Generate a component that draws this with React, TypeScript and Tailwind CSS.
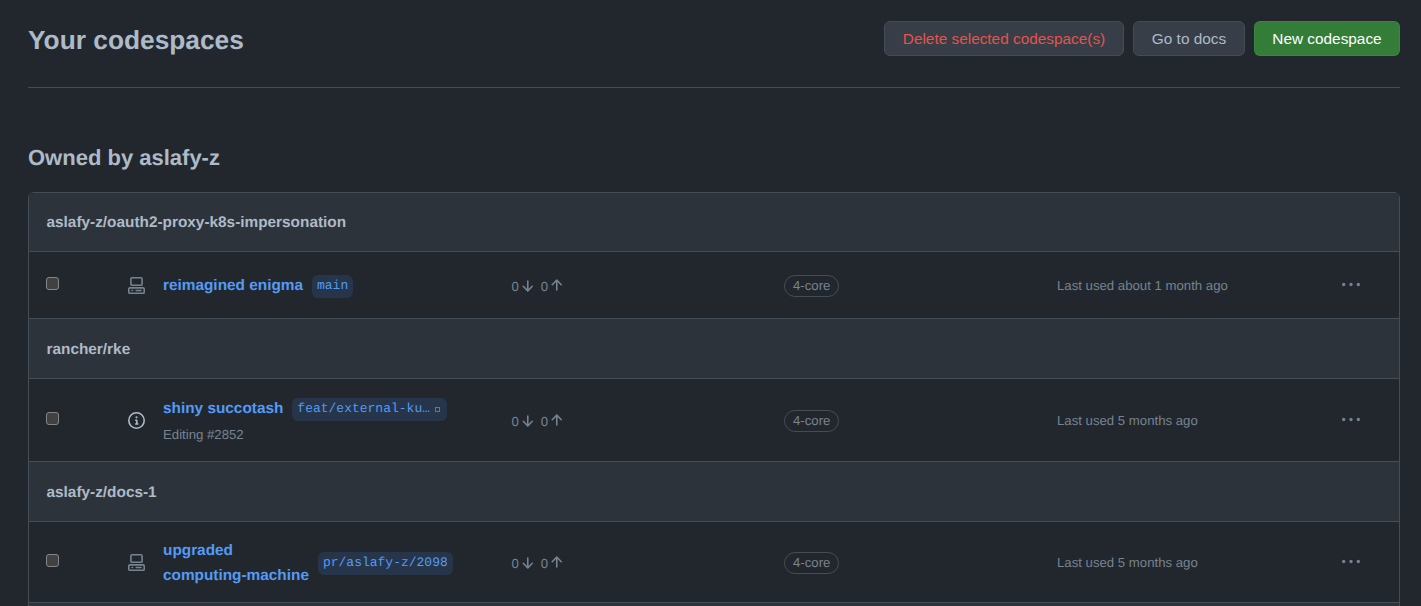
const CODESPACE = [
  "M0 11.25c0-.966.784-1.75 1.75-1.75h12.5c.966 0 1.75.784 1.75 1.75v3A1.75 1.75 0 0 1 14.25 16H1.75A1.75 1.75 0 0 1 0 14.25Zm2-9.5C2 .784 2.784 0 3.75 0h8.5C13.216 0 14 .784 14 1.75v5a1.75 1.75 0 0 1-1.75 1.75h-8.5A1.75 1.75 0 0 1 2 6.75Zm1.75-.25a.25.25 0 0 0-.25.25v5c0 .138.112.25.25.25h8.5a.25.25 0 0 0 .25-.25v-5a.25.25 0 0 0-.25-.25Zm-2 9.5a.25.25 0 0 0-.25.25v3c0 .138.112.25.25.25h12.5a.25.25 0 0 0 .25-.25v-3a.25.25 0 0 0-.25-.25Z",
  "M7 12.75a.75.75 0 0 1 .75-.75h4.5a.75.75 0 0 1 0 1.5h-4.5a.75.75 0 0 1-.75-.75Zm-4 0a.75.75 0 0 1 .75-.75h.5a.75.75 0 0 1 0 1.5h-.5a.75.75 0 0 1-.75-.75Z",
];
const INFO = [
  "M0 8a8 8 0 1 1 16 0A8 8 0 0 1 0 8Zm8-6.5a6.5 6.5 0 1 0 0 13 6.5 6.5 0 0 0 0-13ZM6.5 7.75A.75.75 0 0 1 7.25 7h1a.75.75 0 0 1 .75.75v2.75h.25a.75.75 0 0 1 0 1.5h-2a.75.75 0 0 1 0-1.5h.25v-2h-.25a.75.75 0 0 1-.75-.75ZM8 6a1 1 0 1 1 0-2 1 1 0 0 1 0 2Z",
];
const ARROW_DOWN = [
  "M13.03 8.22a.75.75 0 0 1 0 1.06l-4.25 4.25a.75.75 0 0 1-1.06 0L3.47 9.28a.751.751 0 0 1 .018-1.042.751.751 0 0 1 1.042-.018l2.97 2.97V3.75a.75.75 0 0 1 1.5 0v7.44l2.97-2.97a.75.75 0 0 1 1.06 0Z",
];
const ARROW_UP = [
  "M3.47 7.78a.75.75 0 0 1 0-1.06l4.25-4.25a.75.75 0 0 1 1.06 0l4.25 4.25a.751.751 0 0 1-.018 1.042.751.751 0 0 1-1.042.018L9 4.81v7.44a.75.75 0 0 1-1.5 0V4.81L4.53 7.78a.75.75 0 0 1-1.06 0Z",
];
const KEBAB = [
  "M8 9a1.5 1.5 0 1 0 0-3 1.5 1.5 0 0 0 0 3ZM1.5 9a1.5 1.5 0 1 0 0-3 1.5 1.5 0 0 0 0 3Zm13 0a1.5 1.5 0 1 0 0-3 1.5 1.5 0 0 0 0 3Z",
];

function Octicon({ paths, className }: { paths: string[]; className: string }) {
  return (
    <svg viewBox="0 0 16 16" fill="currentColor" className={className} aria-hidden="true">
      {paths.map((d) => (
        <path key={d} d={d} />
      ))}
    </svg>
  );
}

function RepoHeader({ name, height = "h-[60px]" }: { name: string; height?: string }) {
  return (
    <div className={`${height} pt-[2px] pl-[17.5px] flex items-center bg-[#2d333b] border-b border-[#444c56] text-[15.36px] font-bold text-[#adbac7]`}>
      {name}
    </div>
  );
}

type RowProps = {
  height: string;
  icon: string[];
  iconColor: string;
  title: string[];
  branch: string;
  note?: string;
  truncated?: boolean;
  lastUsed: string;
};

function Row({ height, icon, iconColor, title, branch, note, truncated, lastUsed }: RowProps) {
  return (
    <div className={`${height} pt-[2px] pl-[17px] grid grid-cols-[82px_35px_349px_272px_273px_1fr] items-center border-b border-[#444c56]`}>
      <div className="w-[13px] h-[13px] rounded-[3px] border border-[#858585] bg-[#414141] -mt-[5px]" />
      <Octicon paths={icon} className={`w-[17px] h-[17px] -mt-[1px] ${iconColor}`} />
      <div className="flex flex-col">
        <div className="flex items-center gap-[9px]">
          <div className="mt-[0.5px] -mb-[0.5px] text-[15.36px] leading-[24.5px] font-bold text-[#539bf5]">
            {title.map((t) => (
              <div key={t}>{t}</div>
            ))}
          </div>
          <span className="h-[23px] px-[5px] flex items-center rounded-md bg-[#4184e4]/15 font-['Liberation_Mono',monospace] text-[13px] text-[#539bf5] whitespace-nowrap">
            {branch}
            {truncated && <span className="inline-block w-[5px] h-[5px] ml-[5.5px] mr-[2px] mt-[1px] border border-[#539bf5]/70" />}
          </span>
        </div>
        {note && <div className="mt-[4px] text-[13.2px] leading-[20px] text-[#768390]">{note}</div>}
      </div>
      <div className="pt-[2px] -ml-[0.5px] flex items-center text-[13.2px] text-[#768390]">
        0<Octicon paths={ARROW_DOWN} className="w-[17px] h-[17px] -mt-[2px] mr-[5px]" />
        0<Octicon paths={ARROW_UP} className="w-[17px] h-[17px] -mt-[2px]" />
      </div>
      <div className="flex">
        <span className="h-[22px] px-2 rounded-full border border-[#444c56] text-[13.2px] leading-[20px] text-[#768390]">
          4-core
        </span>
      </div>
      <div className="grid grid-cols-[285px_1fr] items-center text-[13.2px] text-[#768390]">
        <span>{lastUsed}</span>
        <Octicon paths={KEBAB} className="w-[18px] h-[18px] -mt-[1px] text-[#768390]" />
      </div>
    </div>
  );
}

export default function App() {
  return (
    <div className="h-[606px] overflow-hidden bg-[#22272e] pl-[28px] pr-[21px] font-['Liberation_Sans',Arial,sans-serif] [text-rendering:geometricPrecision]">
      <header className="h-[88px] pt-[21px] flex justify-between border-b border-[#444c56]">
        <h1 className="text-[26.3px] leading-[38px] font-bold text-[#adbac7]">Your codespaces</h1>
        <div className="flex gap-[9px]">
          <button className="w-[240px] h-[35px] rounded-md border border-[#444c56] bg-[#373e47] text-[15.36px] text-[#e5534b]">
            Delete selected codespace(s)
          </button>
          <button className="w-[112px] h-[35px] rounded-md border border-[#444c56] bg-[#373e47] text-[15.36px] text-[#adbac7]">
            Go to docs
          </button>
          <button className="w-[146px] h-[35px] rounded-md border border-[#46954a]/40 bg-[#347d39] text-[15.36px] text-white">
            New codespace
          </button>
        </div>
      </header>
      <h2 className="mt-[55px] text-[22px] leading-[30px] font-bold text-[#adbac7]">Owned by aslafy-z</h2>
      <section className="mt-[19px] rounded-t-md border-x border-t border-[#444c56]">
        <RepoHeader name="aslafy-z/oauth2-proxy-k8s-impersonation" height="h-[59px]" />
        <Row
          height="h-[67px]"
          icon={CODESPACE}
          iconColor="text-[#768390]"
          title={["reimagined enigma"]}
          branch="main"
          lastUsed="Last used about 1 month ago"
        />
        <RepoHeader name="rancher/rke" />
        <Row
          height="h-[83px]"
          icon={INFO}
          iconColor="text-[#adbac7]"
          title={["shiny succotash"]}
          branch="feat/external-ku…"
          truncated
          note="Editing #2852"
          lastUsed="Last used 5 months ago"
        />
        <RepoHeader name="aslafy-z/docs-1" />
        <Row
          height="h-[81px]"
          icon={CODESPACE}
          iconColor="text-[#768390]"
          title={["upgraded", "computing-machine"]}
          branch="pr/aslafy-z/2098"
          lastUsed="Last used 5 months ago"
        />
        <RepoHeader name="" />
      </section>
    </div>
  );
}
